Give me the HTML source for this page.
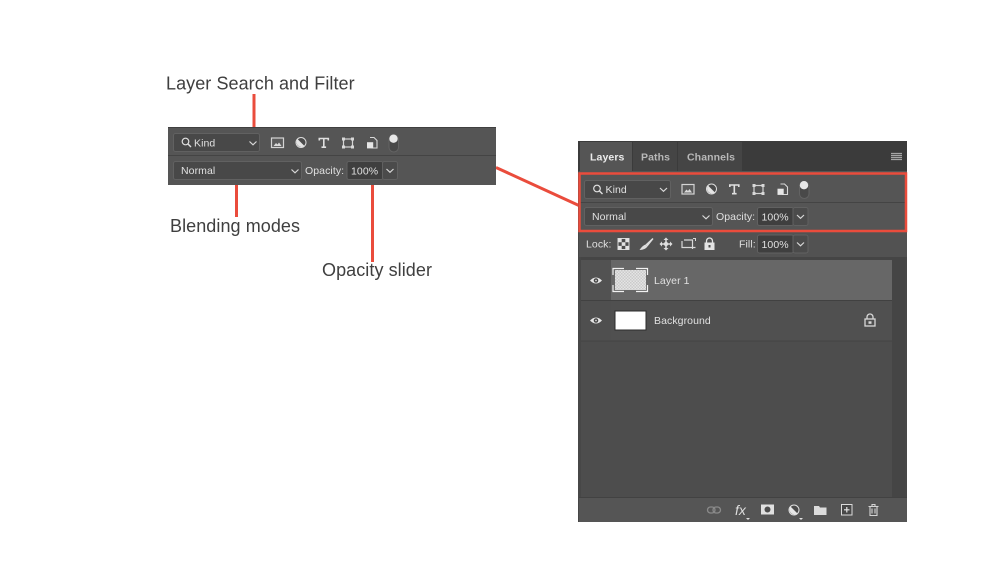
<!DOCTYPE html>
<html><head><meta charset="utf-8"><style>
html,body{margin:0;padding:0;background:#fff;width:1000px;height:563px;overflow:hidden}
svg{display:block}
text{font-family:"Liberation Sans",sans-serif}
.c{fill:#e0e0e0;font-size:10.5px;letter-spacing:.08px}
.a{fill:#3f3f3f;font-size:18px;letter-spacing:.07px}
.p{filter:blur(.3px)}
</style></head><body>
<svg width="1000" height="563" viewBox="0 0 1000 563" xmlns="http://www.w3.org/2000/svg">
<defs>
<g id="chev"><path d="M-3.500-1.500 0 1.800 3.500-1.500" fill="none" stroke="#d8d8d8" stroke-width="1.200"/></g>
<g id="icons">
 <rect x="0" y="-5" width="12" height="9.500" fill="#5c5c5c" stroke="#d4d4d4" stroke-width="1.200"/><path d="M2 3 4.500 0 6 1.500 7.500-.5 10 3z" fill="#dadada"/>
 <circle cx="29.500" cy="-.5" r="5" fill="#4a4a4a" stroke="#dcdcdc" stroke-width="1"/><path d="M26 -4 33 3A5 5 0 0 1 26 -4z" fill="#e4e4e4"/>
 <path d="M47.800-2.500V-4.500H56.800V-2.500M52.300-4.500V4M50 4.200H54.600" fill="none" stroke="#e0e0e0" stroke-width="1.600"/>
 <rect x="72" y="-4" width="9" height="8" fill="none" stroke="#d4d4d4" stroke-width="1.200"/><g fill="#d8d8d8"><rect x="70.500" y="-5.500" width="3" height="3"/><rect x="79.500" y="-5.500" width="3" height="3"/><rect x="70.500" y="2.500" width="3" height="3"/><rect x="79.500" y="2.500" width="3" height="3"/></g>
 <path d="M98.500-5.500H102.500L105.500-2.500V5H100" fill="none" stroke="#d8d8d8" stroke-width="1.100"/><rect x="95.500" y="-.8" width="6.200" height="6.200" fill="#e6e6e6"/>
 <rect x="117.500" y="-8" width="9.500" height="17" rx="4.700" fill="#494949" stroke="#636363"/><circle cx="122" cy="-4.300" r="4.200" fill="#e8e8e8"/>
</g>
<g id="eye"><path d="M-6 0Q0-6 6 0 0 6-6 0z" fill="#e6e6e6"/><circle r="2.300" fill="#454545"/><circle r=".9" fill="#d8d8d8"/></g>
<g id="box"><rect width="36" height="18" rx="2" fill="#3f3f3f" stroke="#616161"/><rect x="35.500" width="15" height="18" rx="2" fill="#4b4b4b" stroke="#616161"/><text class="c" x="4" y="13">100%</text><use href="#chev" x="43" y="9"/></g>
<g id="padlock"><rect x="-5" y="-1" width="10" height="7" fill="none" stroke="#d8d8d8" stroke-width="1.300"/><path d="M-3-1V-3A3 3 0 0 1 3-3V-1" fill="none" stroke="#d8d8d8" stroke-width="1.300"/><rect x="-1.500" y="1.300" width="3" height="2.500" fill="#d8d8d8"/></g>
<pattern id="chk" width="3" height="3" patternUnits="userSpaceOnUse"><rect width="3" height="3" fill="#e4e4e4"/><rect width="1.500" height="1.500" fill="#cacaca"/><rect x="1.500" y="1.500" width="1.500" height="1.500" fill="#cacaca"/></pattern>
</defs>

<text class="a" x="166" y="89.500">Layer Search and Filter</text>
<text class="a" x="170" y="232">Blending modes</text>
<text class="a" x="322" y="276">Opacity slider</text>
<g fill="#ea4c3c"><rect x="252.500" y="94" width="3" height="34"/><rect x="235" y="184" width="3" height="33"/><rect x="371" y="184" width="3" height="78"/></g>
<path d="M496 167.500 580 206" stroke="#ea4c3c" stroke-width="3" fill="none"/>

<g class="p">
<rect x="168" y="127" width="328" height="58" fill="#555"/>
<rect x="168" y="127" width="328" height="1" fill="#404040"/>
<rect x="168" y="155" width="328" height="1" fill="#444"/>
<rect x="173.500" y="133.500" width="86" height="18" rx="2" fill="#484848" stroke="#616161"/>
<circle cx="185.500" cy="141.500" r="3.300" fill="none" stroke="#e0e0e0" stroke-width="1.200"/><path d="M188 144 191 147" stroke="#e0e0e0" stroke-width="1.400"/>
<text class="c" x="194" y="146.500">Kind</text><use href="#chev" x="253" y="143"/>
<use href="#icons" x="271.500" y="143"/>
<rect x="173.500" y="161.500" width="128" height="18" rx="2" fill="#484848" stroke="#616161"/>
<text class="c" x="181" y="174">Normal</text><use href="#chev" x="295" y="171"/>
<text class="c" x="305" y="174">Opacity:</text>
<use href="#box" x="347" y="161.500"/>

<rect x="578" y="141" width="329" height="381" fill="#474747"/>
<rect x="581" y="171" width="324" height="349" fill="#4d4d4d"/>
<rect x="578" y="141" width="329" height="30" fill="#3b3b3b"/>
<rect x="580" y="142" width="52" height="29" fill="#555"/>
<rect x="633" y="142" width="44" height="29" fill="#454545"/>
<rect x="678" y="142" width="64" height="29" fill="#454545"/>
<text x="590" y="160.500" fill="#ececec" font-size="10.500" font-weight="bold" style="letter-spacing:.1px">Layers</text>
<text x="641" y="160.500" fill="#b8b8b8" font-size="10.500" font-weight="bold" style="letter-spacing:.1px">Paths</text>
<text x="687" y="160.500" fill="#b8b8b8" font-size="10.500" font-weight="bold" style="letter-spacing:.1px">Channels</text>
<path d="M891 153.500H902M891 155.500H902M891 157.500H902M891 159.500H902" stroke="#a5a5a5" stroke-width="1.200"/>

<rect x="579" y="171" width="328" height="62" fill="#555"/>
<rect x="579" y="202" width="328" height="1" fill="#444"/>
<rect x="584.500" y="180.500" width="86" height="18" rx="2" fill="#484848" stroke="#616161"/>
<circle cx="597" cy="188.500" r="3.300" fill="none" stroke="#e0e0e0" stroke-width="1.200"/><path d="M599.500 191 602.500 194" stroke="#e0e0e0" stroke-width="1.400"/>
<text class="c" x="605.500" y="193">Kind</text><use href="#chev" x="663.500" y="189.500"/>
<use href="#icons" x="682" y="189.500"/>
<rect x="584.500" y="207.500" width="128" height="18" rx="2" fill="#484848" stroke="#616161"/>
<text class="c" x="592" y="220">Normal</text><use href="#chev" x="706" y="217"/>
<text class="c" x="716" y="220">Opacity:</text>
<use href="#box" x="757.500" y="207.500"/>
<rect x="579.500" y="173.500" width="326.500" height="57.500" fill="none" stroke="#ea4c3c" stroke-width="2.500"/>

<rect x="579" y="233" width="328" height="24" fill="#525252"/>
<text class="c" x="586" y="247.500">Lock:</text>
<rect x="618" y="238.500" width="11" height="11" fill="#4d4d4d" stroke="#d8d8d8"/>
<path d="M618 238.500h3.700v3.700h-3.700zM625.300 238.500h3.700v3.700h-3.700zM621.700 242.200h3.700v3.700h-3.700zM618 245.900h3.700v3.700h-3.700zM625.300 245.900h3.700v3.700h-3.700z" fill="#e4e4e4"/>
<path d="M652.500 238 645.500 244.500 647.500 246.500 653.500 239z" fill="#dedede"/><path d="M645.500 244.500Q642.500 245.500 639.500 250 645 250 647.500 246.500z" fill="#dedede"/>
<path d="M666 238.500V249.500M660.500 244H671.500" stroke="#dedede" stroke-width="1.500"/><path d="M666 237.500 668.500 240H663.500zM666 250.500 668.500 248H663.500zM659.500 244 662 241.500V246.500zM672.500 244 670 241.500V246.500z" fill="#dedede"/><circle cx="666" cy="244" r="2.200" fill="#dedede"/>
<path d="M684 240H692.500V249M682 241V247.500H695.500" fill="none" stroke="#d8d8d8" stroke-width="1.200"/><path d="M693 238.500h2.500v2.500" fill="none" stroke="#d8d8d8"/>
<rect x="704.500" y="242.500" width="10" height="7.500" fill="#e4e4e4"/><path d="M706.500 242.500V241A3 3 0 0 1 712.500 241V242.500" fill="none" stroke="#e4e4e4" stroke-width="1.300"/><rect x="708.500" y="245" width="2" height="2.500" fill="#4d4d4d"/>
<text class="c" x="739" y="247.500">Fill:</text>
<use href="#box" x="757.500" y="235"/>

<rect x="581" y="257" width="324" height="3" fill="#454545"/>
<rect x="581" y="260" width="30" height="40" fill="#525252"/>
<rect x="611" y="260" width="281" height="40" fill="#676767"/>
<rect x="581" y="300" width="311" height="1" fill="#414141"/>
<rect x="581" y="301" width="30" height="40" fill="#4f4f4f"/>
<rect x="611" y="301" width="281" height="40" fill="#505050"/>
<rect x="581" y="340.500" width="311" height="1" fill="#444"/>
<rect x="892" y="260" width="13" height="238" fill="#454545"/>
<use href="#eye" x="596" y="280.500"/>
<use href="#eye" x="596" y="320.500"/>
<rect x="615" y="270" width="31" height="20" fill="url(#chk)"/>
<path d="M613 275V268.500H624M636 268.500H647.500V275M647.500 285V291.500H636M624 291.500H613V285" fill="none" stroke="#f2f2f2" stroke-width="1.200"/>
<text class="c" x="654" y="284">Layer 1</text>
<rect x="615" y="311" width="31" height="19" fill="#fff" stroke="#2b2b2b"/>
<text class="c" x="654" y="324">Background</text>
<use href="#padlock" x="870" y="320"/>

<rect x="579" y="498" width="328" height="24" fill="#555"/>
<rect x="579" y="497" width="328" height="1" fill="#424242"/>
<g fill="none" stroke="#8a8a8a" stroke-width="1.300"><rect x="707.500" y="507" width="7.500" height="6" rx="3"/><rect x="713" y="507" width="7.500" height="6" rx="3"/></g>
<text x="735" y="515" fill="#dedede" font-size="14" font-style="italic" style="font-family:'Liberation Sans',sans-serif">fx</text>
<path d="M746 518H750L748 520z" fill="#e0e0e0"/>
<rect x="761" y="504.500" width="13" height="10" fill="#e0e0e0"/><circle cx="767.500" cy="509.500" r="3" fill="#4d4d4d"/>
<circle cx="794" cy="510" r="5" fill="#4a4a4a" stroke="#e0e0e0" stroke-width="1"/><path d="M790.500 506.500 797.500 513.500A5 5 0 0 1 790.500 506.500z" fill="#e6e6e6"/>
<path d="M799 518H803L801 520z" fill="#e0e0e0"/>
<path d="M814 506H819L820 507.500H826.500V515H814z" fill="#dcdcdc"/>
<rect x="841.500" y="504.500" width="10.500" height="10.500" fill="#484848" stroke="#dcdcdc"/><path d="M844 509.800H849.500M846.800 507V512.500" stroke="#e6e6e6" stroke-width="1.200"/>
<path d="M868.500 506.500H878.500M870 506.500V515.500H877V506.500M872 506.500V504.500H875V506.500M872 508.500V513.500M875 508.500V513.500" fill="none" stroke="#d4d4d4" stroke-width="1.100"/>
</g>
</svg>
</body></html>
